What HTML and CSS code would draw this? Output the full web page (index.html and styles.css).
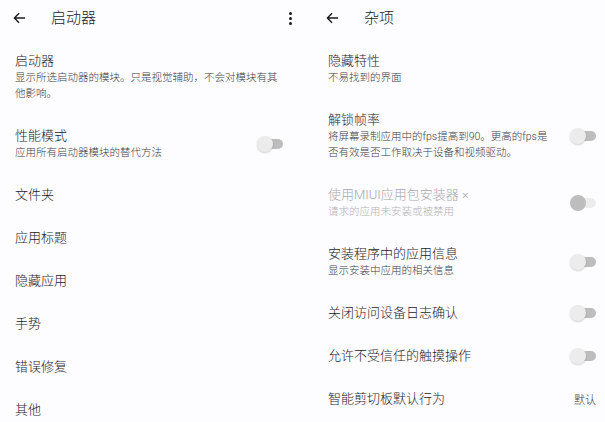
FILE: index.html
```html
<!DOCTYPE html>
<html lang="zh-CN">
<head>
    <meta charset="UTF-8">
    <meta name="viewport" content="width=device-width, initial-scale=1.0">
    <title>设置</title>
    <link rel="stylesheet" href="styles.css">
</head>
<body>
    <div class="screens">
        <!-- 启动器 -->
        <section class="panel panel-left">
            <div class="topbar">
                <svg class="back" width="14" height="12" viewBox="0 0 14 12">
                    <path d="M13 6H1.5M6.5 1L1.5 6l5 5" fill="none" stroke="#1c1b1f" stroke-width="1.5"/>
                </svg>
                <h1>启动器</h1>
                <span class="more"><i></i><i></i><i></i></span>
            </div>
            <ul class="prefs">
                <li class="pref">
                    <div class="text">
                        <div class="title">启动器</div>
                        <div class="summary">显示所选启动器的模块。只是视觉辅助，不会对模块有其他影响。</div>
                    </div>
                </li>
                <li class="pref">
                    <div class="text">
                        <div class="title">性能模式</div>
                        <div class="summary">应用所有启动器模块的替代方法</div>
                    </div>
                    <span class="switch"></span>
                </li>
                <li class="pref"><div class="text"><div class="title">文件夹</div></div></li>
                <li class="pref"><div class="text"><div class="title">应用标题</div></div></li>
                <li class="pref"><div class="text"><div class="title">隐藏应用</div></div></li>
                <li class="pref"><div class="text"><div class="title">手势</div></div></li>
                <li class="pref"><div class="text"><div class="title">错误修复</div></div></li>
                <li class="pref"><div class="text"><div class="title">其他</div></div></li>
            </ul>
        </section>

        <!-- 杂项 -->
        <section class="panel panel-right">
            <div class="topbar">
                <svg class="back" width="14" height="12" viewBox="0 0 14 12">
                    <path d="M13 6H1.5M6.5 1L1.5 6l5 5" fill="none" stroke="#1c1b1f" stroke-width="1.5"/>
                </svg>
                <h1>杂项</h1>
            </div>
            <ul class="prefs">
                <li class="pref">
                    <div class="text">
                        <div class="title">隐藏特性</div>
                        <div class="summary">不易找到的界面</div>
                    </div>
                </li>
                <li class="pref">
                    <div class="text">
                        <div class="title">解锁帧率</div>
                        <div class="summary">将屏幕录制应用中的fps提高到90。更高的fps是否有效是否工作取决于设备和视频驱动。</div>
                    </div>
                    <span class="switch"></span>
                </li>
                <li class="pref disabled">
                    <div class="text">
                        <div class="title">使用MIUI应用包安装器 ×</div>
                        <div class="summary">请求的应用未安装或被禁用</div>
                    </div>
                    <span class="switch"></span>
                </li>
                <li class="pref">
                    <div class="text">
                        <div class="title">安装程序中的应用信息</div>
                        <div class="summary">显示安装中应用的相关信息</div>
                    </div>
                    <span class="switch"></span>
                </li>
                <li class="pref">
                    <div class="text"><div class="title">关闭访问设备日志确认</div></div>
                    <span class="switch"></span>
                </li>
                <li class="pref">
                    <div class="text"><div class="title">允许不受信任的触摸操作</div></div>
                    <span class="switch"></span>
                </li>
                <li class="pref">
                    <div class="text"><div class="title">智能剪切板默认行为</div></div>
                    <span class="value">默认</span>
                </li>
            </ul>
        </section>
    </div>
</body>
</html>
```

FILE: styles.css
```css
body {
    margin: 0;
    background: #fdfcff;
    color: #1c1b1f;
    font-family: Roboto, "Noto Sans CJK SC", sans-serif;
    font-weight: 300;
    overflow: hidden;
}
.screens {
    display: flex;
    height: 422px;
}
.panel {
    box-sizing: border-box;
}
.panel-left {
    width: 300px;
    padding: 0 17px 0 15px;
}
.panel-right {
    margin-left: 12px;
    flex: 1;
    padding: 0 9px 0 16px;
}
.topbar {
    height: 36px;
    display: flex;
    align-items: center;
}
.back {
    margin-left: -2px;
    width: 13px;
    flex: none;
}
.topbar h1 {
    margin: 0 0 0 25px;
    font-size: 15px;
    font-weight: 300;
    line-height: 20px;
}
.more {
    margin-left: auto;
    margin-right: -9px;
    display: flex;
    flex-direction: column;
    gap: 2px;
}
.more i {
    display: block;
    width: 3px;
    height: 3px;
    border-radius: 50%;
    background: #1c1b1f;
}
.prefs {
    list-style: none;
    margin: 0;
    padding: 3px 0 0;
}
.pref {
    display: flex;
    align-items: center;
    padding: 12px 0;
}
.text {
    flex: 1;
    min-width: 0;
}
.title {
    font-size: 13px;
    line-height: 19px;
}
.summary {
    font-size: 10.5px;
    line-height: 16px;
    color: #3c3c44;
}
.disabled .title {
    color: #a9a9ad;
}
.disabled .summary {
    color: #b3b3b7;
}
.value {
    font-size: 11px;
    color: #3c3c44;
}
.switch {
    position: relative;
    flex: none;
    width: 21px;
    height: 10px;
    margin-left: 23px;
    border-radius: 5px;
    background: #bdbdbd;
}
.switch::before {
    content: "";
    position: absolute;
    left: -5px;
    top: -3px;
    width: 16px;
    height: 16px;
    border-radius: 50%;
    background: #ececec;
    box-shadow: 0 1px 2px rgba(0, 0, 0, 0.18);
}
.disabled .switch {
    background: #ececec;
}
.disabled .switch::before {
    background: #bdbdbd;
    box-shadow: none;
}
```
